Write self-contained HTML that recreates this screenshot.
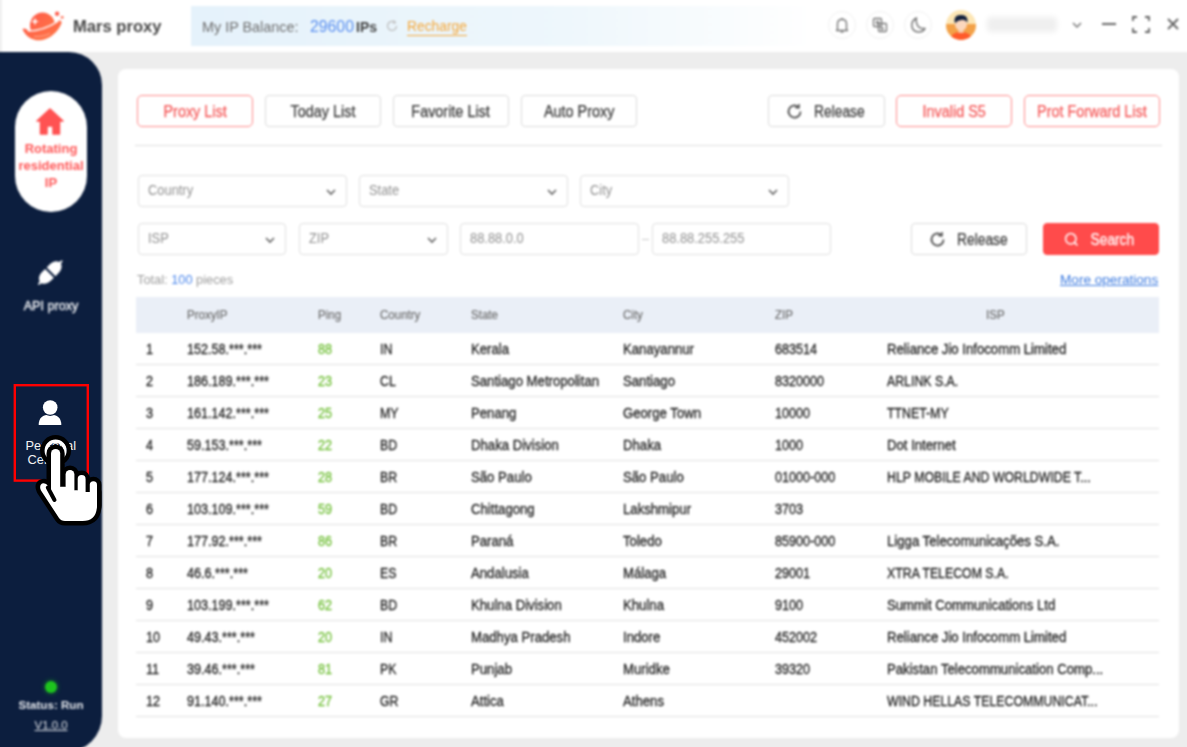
<!DOCTYPE html>
<html><head><meta charset="utf-8">
<style>
*{margin:0;padding:0;box-sizing:border-box}
html,body{width:1187px;height:747px;overflow:hidden;background:#ededed;font-family:"Liberation Sans",sans-serif;color:#333}
.abs{position:absolute}
#hdr{left:-20px;top:-20px;width:1227px;height:72px;background:#fff}
#logo-t{left:73px;top:16.5px;font-size:16.6px;font-weight:bold;color:#484848;white-space:nowrap}
#bal{left:191px;top:6px;width:620px;height:40px;background:linear-gradient(90deg,#e5f2fb 0%,#eef7fc 60%,#fff 100%)}
.t{position:absolute;white-space:nowrap;line-height:1}
#side{left:-20px;top:52px;width:122px;height:700px;background:#0c1e3e;border-radius:0 33px 36px 0}
#card{left:118px;top:69px;width:1061px;height:669px;background:#fff;border-radius:8px}
.bt{display:inline-block;transform:translateY(1.2px) scaleX(0.9);-webkit-text-stroke:0.25px currentColor}
.btn{position:absolute;height:32px;border:1px solid #dcdcdc;border-radius:4px;background:#fff;font-size:16px;color:#383838;display:flex;align-items:center;justify-content:center;white-space:nowrap}
.btn.red{border-color:#ff8a8a;color:#f55a5a;border-radius:5px}
.sel{position:absolute;height:32px;border:1px solid #e0e0e0;border-radius:4px;background:#fff;font-size:14px;color:#909090}
.sel span{position:absolute;left:9px;top:7.3px;line-height:1;transform:scaleX(0.92);transform-origin:0 0}
.chev{position:absolute;top:11px;width:9px;height:9px}
#thead{left:136px;top:297px;width:1023px;height:36px;background:#eaeff7}
.th{position:absolute;top:309px;font-size:12px;transform:scaleX(0.96);transform-origin:0 0;color:#6e6e6e;-webkit-text-stroke:0.2px #6e6e6e;line-height:1;white-space:nowrap}
.row{position:absolute;left:136px;width:1023px;height:32px;border-bottom:1px solid #e0e0e0}
.td{position:absolute;font-size:14px;transform:scaleX(0.9);transform-origin:0 0;color:#222;-webkit-text-stroke:0.3px #222;line-height:1;white-space:nowrap}
.ping{color:#74c03c;-webkit-text-stroke:0.3px #74c03c}
#root{position:absolute;left:-20px;top:-20px;width:1227px;height:787px;background:#ededed;filter:blur(1px)}
#inner{position:absolute;left:20px;top:20px;width:1187px;height:747px}
</style></head><body><div id="root"><div id="inner">
<div id="hdr" class="abs"></div>
<div class="abs" style="left:-20px;top:-20px;width:22px;height:72px;background:#f0f0f0"></div>
<div id="logo-t" class="abs">Mars proxy</div>
<div id="bal" class="abs"></div>
<div class="t" style="left:202px;top:20px;font-size:14.4px;color:#6e6e6e">My IP Balance:</div>
<div class="t" style="left:310px;top:19px;font-size:15.8px;color:#5a8ff0">29600</div>
<div class="t" style="left:356px;top:20px;font-size:14px;color:#444;font-weight:bold">IPs</div>
<div class="t" style="left:407px;top:19.5px;font-size:13.8px;color:#f5a738;border-bottom:1.5px solid #f5a738;padding-bottom:1.5px">Recharge</div>


<!-- HEADER -->
<svg class="abs" style="left:0;top:0" width="70" height="50">
<defs><linearGradient id="lg" x1="0" y1="0" x2="1" y2="1"><stop offset="0" stop-color="#ff5a4a"/><stop offset="1" stop-color="#ff7a45"/></linearGradient></defs>
<g fill="url(#lg)">
<ellipse cx="42.5" cy="25.5" rx="12.5" ry="13"/>
<path d="M22.5,29.2 C24.5,27.5 26.5,29.5 28.5,31 C38,31 50,26 58.7,20.5 C61,20 62,21.5 61.4,23.5 C58,32 50,39 41,40.2 C33,41 26,37 22.5,29.2 Z"/>
</g>
<path d="M27.8,31 C38,31.2 50,26.5 58.5,21" fill="none" stroke="#fff" stroke-width="1.5" opacity="0.85"/>
<path d="M34,36.5 C40,37 46,35.5 50,33.5" fill="none" stroke="#fff" stroke-width="0.9" opacity="0.45"/>
<path d="M35,17.5 L36.1,20.4 L39,21.5 L36.1,22.6 L35,25.5 L33.9,22.6 L31,21.5 L33.9,20.4 Z" fill="#fff" opacity="0.95"/>
<circle cx="57.1" cy="13.8" r="2.2" fill="#ff5e4e"/>
<circle cx="62.2" cy="17.3" r="1.4" fill="#ff6e55"/>
</svg>
<!-- header icons -->
<div class="abs" style="left:828px;top:11px;width:28px;height:28px;border-radius:50%;border:1px solid #f1f1f1"></div>
<div class="abs" style="left:866px;top:11px;width:28px;height:28px;border-radius:50%;border:1px solid #f1f1f1"></div>
<div class="abs" style="left:904px;top:11px;width:28px;height:28px;border-radius:50%;border:1px solid #f1f1f1"></div>
<svg class="abs" style="left:828px;top:11px" width="28" height="28" viewBox="0 0 28 28" fill="none" stroke="#777" stroke-width="1.4" stroke-linejoin="round">
<path d="M9.5,18.5 L9.5,13 Q9.5,8.5 14,8.3 Q18.5,8.5 18.5,13 L18.5,18.5 L19.5,19.5 L8.5,19.5 Z"/>
<path d="M14,7 L14,8.3"/><path d="M12.5,21 L15.5,21"/>
</svg>
<svg class="abs" style="left:866px;top:11px" width="28" height="28" viewBox="0 0 28 28" fill="none" stroke="#777" stroke-width="1.3">
<rect x="7.5" y="7.5" width="8" height="8" rx="1"/>
<rect x="12.5" y="12.5" width="8" height="8" rx="1"/>
<path d="M9.5,11.5 L13.5,11.5 M11.5,9.5 L11.5,13.5"/><path d="M15,16 L18,17.5 L15,19 Z" stroke-width="1"/>
</svg>
<svg class="abs" style="left:904px;top:11px" width="28" height="28" viewBox="0 0 28 28" fill="none" stroke="#777" stroke-width="1.5" stroke-linejoin="round">
<path d="M12.5,7 Q7.5,9.5 7.8,14.8 Q8.5,20.5 14.5,21 Q18.8,21 21,17.5 Q15,18 13,13.5 Q11.5,10 12.5,7 Z"/>
</svg>
<!-- avatar -->
<svg class="abs" style="left:946px;top:10px" width="30" height="30" viewBox="0 0 30 30">
<defs><clipPath id="avc"><circle cx="15" cy="15" r="15"/></clipPath></defs>
<g clip-path="url(#avc)">
<rect width="30" height="30" fill="#fde6b5"/>
<rect y="14" width="30" height="16" fill="#f3a148"/>
<path d="M4,30 Q5,22 15,22 Q25,22 26,30 Z" fill="#ff5a2a"/>
<rect x="12.5" y="17" width="5" height="6" fill="#f7c9a8"/>
<ellipse cx="15" cy="14" rx="6" ry="6.8" fill="#fbd7bd"/>
<path d="M8.5,12 Q8,5 14,5 Q21,4.5 21.5,10 L21.5,12.5 Q19,9 15,10 Q11,10.5 9.5,13 Z" fill="#14213d"/>
</g>
</svg>
<div class="abs" style="left:987px;top:17px;width:70px;height:15px;background:#efefef;filter:blur(2.5px);border-radius:4px"></div>
<svg class="abs" style="left:1071px;top:20px" width="12" height="10" viewBox="0 0 12 10" fill="none" stroke="#777" stroke-width="1.5"><path d="M2,3 L6,7 L10,3"/></svg>
<div class="abs" style="left:1102px;top:23px;width:14px;height:2px;background:#666"></div>
<svg class="abs" style="left:1132px;top:16px" width="18" height="17" viewBox="0 0 18 17" fill="none" stroke="#666" stroke-width="1.8"><path d="M1,5 L1,1 L5,1 M13,1 L17,1 L17,5 M17,12 L17,16 L13,16 M5,16 L1,16 L1,12"/></svg>
<svg class="abs" style="left:1166px;top:17px" width="14" height="14" viewBox="0 0 14 14" fill="none" stroke="#666" stroke-width="1.9"><path d="M2,2 L12,12 M12,2 L2,12"/></svg>
<!-- balance refresh icon -->
<svg class="abs" style="left:385px;top:19px" width="14" height="14" viewBox="0 0 14 14" fill="none" stroke="#bbb" stroke-width="1.3"><path d="M11.5,7 A4.5,4.5 0 1 1 9.5,3.2"/><path d="M8.5,1.5 L10.5,3.5 L8,4.5" stroke-width="1.1"/></svg>
<!-- /HEADER -->
<div id="side" class="abs"></div>
<div id="card" class="abs"></div>
<!-- SIDEBAR -->
<div class="abs" style="left:15px;top:91px;width:72px;height:121px;background:#fff;border-radius:36px"></div>
<svg class="abs" style="left:36px;top:108px" width="28" height="27" viewBox="0 0 28 27">
<path d="M14 1 L27 13 L23.5 13 L23.5 26 L17 26 L17 18 L11 18 L11 26 L4.5 26 L4.5 13 L1 13 Z" fill="#ff5252" stroke="#ff5252" stroke-width="1.5" stroke-linejoin="round"/>
</svg>
<div class="t" style="left:0;width:102px;text-align:center;top:140px;font-size:13px;font-weight:bold;color:#ff5757;line-height:17px;white-space:normal">Rotating<br>residential<br>IP</div>

<svg class="abs" style="left:0;top:0;overflow:visible" width="102" height="300">
<g transform="translate(50.3 272.6) rotate(45)" fill="#fff">
<path d="M-6.2,-1.1 L6.2,-1.1 L6.2,-5.5 C6.2,-10 3.8,-13 1.3,-13.7 L0.6,-17 L-0.6,-17 L-1.3,-13.7 C-3.8,-13 -6.2,-10 -6.2,-5.5 Z"/>
<path d="M-6.2,1.1 L6.2,1.1 L6.2,5.5 C6.2,10 3.8,13 1.3,13.7 L0.6,17 L-0.6,17 L-1.3,13.7 C-3.8,13 -6.2,10 -6.2,5.5 Z"/>
</g></svg>
<div class="t" style="left:0;width:102px;text-align:center;top:300px;font-size:12.6px;color:#e4e7ec;-webkit-text-stroke:0.45px #e4e7ec">API proxy</div>



<div class="abs" style="left:45px;top:681px;width:12px;height:12px;border-radius:50%;background:#1ec31e;box-shadow:0 0 4px 1px rgba(30,200,30,0.35)"></div>
<div class="t" style="left:0;width:102px;text-align:center;top:699px;font-size:11.6px;font-weight:bold;color:#e6e9ee">Status: Run</div>
<div class="t" style="left:0;width:102px;text-align:center;top:720px;font-size:11.4px;color:#e0e3e8"><span style="text-decoration:underline">V1.0.0</span></div>

<!-- /SIDEBAR -->


<!-- top buttons -->
<div class="btn red" style="left:137px;top:95px;width:116px"><span class="bt">Proxy List</span></div>
<div class="btn" style="left:265px;top:95px;width:116px"><span class="bt">Today List</span></div>
<div class="btn" style="left:393px;top:95px;width:116px"><span class="bt">Favorite List</span></div>
<div class="btn" style="left:521px;top:95px;width:116px"><span class="bt">Auto Proxy</span></div>
<div class="btn" style="left:768px;top:95px;width:117px"><svg width="17" height="17" viewBox="0 0 15 15" fill="none" stroke="#555" stroke-width="1.6" style="margin-right:7px;margin-left:2px"><path d="M12.8,7.5 A5.3,5.3 0 1 1 10.8,3.4"/><path d="M11.6,1 L11.3,4.2 L8.2,3.8" stroke-width="1.5"/></svg><span class="bt" style="transform:translateY(1.2px) scaleX(0.86)">Release</span></div>
<div class="btn red" style="left:896px;top:95px;width:116px"><span class="bt">Invalid S5</span></div>
<div class="btn red" style="left:1024px;top:95px;width:136px"><span class="bt">Prot Forward List</span></div>
<div class="abs" style="left:135px;top:145px;width:1027px;height:1px;background:#dedede"></div>

<!-- filters -->
<div class="sel" style="left:138px;top:175px;width:209px"><span>Country</span><svg class="chev" style="right:9px;top:12px;width:12px;height:8px" width="12" height="8" viewBox="0 0 12 8" fill="none" stroke="#666" stroke-width="1.6"><path d="M2,2 L6,6 L10,2"/></svg></div>
<div class="sel" style="left:359px;top:175px;width:209px"><span>State</span><svg class="chev" style="right:9px;top:12px;width:12px;height:8px" width="12" height="8" viewBox="0 0 12 8" fill="none" stroke="#666" stroke-width="1.6"><path d="M2,2 L6,6 L10,2"/></svg></div>
<div class="sel" style="left:580px;top:175px;width:209px"><span>City</span><svg class="chev" style="right:9px;top:12px;width:12px;height:8px" width="12" height="8" viewBox="0 0 12 8" fill="none" stroke="#666" stroke-width="1.6"><path d="M2,2 L6,6 L10,2"/></svg></div>
<div class="sel" style="left:138px;top:223px;width:148px"><span>ISP</span><svg class="chev" style="right:9px;top:12px;width:12px;height:8px" width="12" height="8" viewBox="0 0 12 8" fill="none" stroke="#666" stroke-width="1.6"><path d="M2,2 L6,6 L10,2"/></svg></div>
<div class="sel" style="left:299px;top:223px;width:149px"><span>ZIP</span><svg class="chev" style="right:9px;top:12px;width:12px;height:8px" width="12" height="8" viewBox="0 0 12 8" fill="none" stroke="#666" stroke-width="1.6"><path d="M2,2 L6,6 L10,2"/></svg></div>
<div class="sel" style="left:460px;top:223px;width:179px"><span>88.88.0.0</span></div>
<div class="abs" style="left:642px;top:239px;width:7px;height:1px;background:#ccc"></div>
<div class="sel" style="left:652px;top:223px;width:179px"><span>88.88.255.255</span></div>
<div class="btn" style="left:911px;top:223px;width:116px"><svg width="17" height="17" viewBox="0 0 15 15" fill="none" stroke="#555" stroke-width="1.6" style="margin-right:7px;margin-left:2px"><path d="M12.8,7.5 A5.3,5.3 0 1 1 10.8,3.4"/><path d="M11.6,1 L11.3,4.2 L8.2,3.8" stroke-width="1.5"/></svg><span class="bt" style="transform:translateY(1.2px) scaleX(0.86)">Release</span></div>
<div class="btn" style="left:1043px;top:223px;width:116px;background:#ff4b4b;border-color:#ff4b4b;color:#fff"><svg width="15" height="15" viewBox="0 0 15 15" fill="none" stroke="#fff" stroke-width="1.5" style="margin-right:8px"><circle cx="6.8" cy="6.8" r="5.2"/><path d="M10.6,10.6 L13.5,13.5"/></svg><span class="bt" style="transform:translateY(1.2px) scaleX(0.86)">Search</span></div>

<div class="t" style="left:137px;top:274px;font-size:12.8px;color:#9c9c9c">Total: <span style="color:#4a86ec">100</span> pieces</div>
<div class="t" style="left:1060px;top:273px;font-size:13.6px;color:#3d7be0;text-decoration:underline">More operations</div>

<div id="thead" class="abs"></div>
<!--TABLE-->
<div class="th" style="left:187px">ProxyIP</div>
<div class="th" style="left:318px">Ping</div>
<div class="th" style="left:380px">Country</div>
<div class="th" style="left:471px">State</div>
<div class="th" style="left:623px">City</div>
<div class="th" style="left:775px">ZIP</div>
<div class="th" style="left:986px">ISP</div>
<div class="row" style="top:333px"></div>
<div class="td" style="left:146px;top:342px;transform:scaleX(0.9)">1</div>
<div class="td" style="left:187px;top:342px;transform:scaleX(0.9)">152.58.***.***</div>
<div class="td ping" style="left:318px;top:342px;transform:scaleX(0.9)">88</div>
<div class="td" style="left:380px;top:342px;transform:scaleX(0.88)">IN</div>
<div class="td" style="left:471px;top:342px;transform:scaleX(0.94)">Kerala</div>
<div class="td" style="left:623px;top:342px;transform:scaleX(0.94)">Kanayannur</div>
<div class="td" style="left:775px;top:342px;transform:scaleX(0.9)">683514</div>
<div class="td" style="left:887px;top:342px;transform:scaleX(0.94)">Reliance Jio Infocomm Limited</div>
<div class="row" style="top:365px"></div>
<div class="td" style="left:146px;top:374px;transform:scaleX(0.9)">2</div>
<div class="td" style="left:187px;top:374px;transform:scaleX(0.9)">186.189.***.***</div>
<div class="td ping" style="left:318px;top:374px;transform:scaleX(0.9)">23</div>
<div class="td" style="left:380px;top:374px;transform:scaleX(0.88)">CL</div>
<div class="td" style="left:471px;top:374px;transform:scaleX(0.94)">Santiago Metropolitan</div>
<div class="td" style="left:623px;top:374px;transform:scaleX(0.94)">Santiago</div>
<div class="td" style="left:775px;top:374px;transform:scaleX(0.9)">8320000</div>
<div class="td" style="left:887px;top:374px;transform:scaleX(0.88)">ARLINK S.A.</div>
<div class="row" style="top:397px"></div>
<div class="td" style="left:146px;top:406px;transform:scaleX(0.9)">3</div>
<div class="td" style="left:187px;top:406px;transform:scaleX(0.9)">161.142.***.***</div>
<div class="td ping" style="left:318px;top:406px;transform:scaleX(0.9)">25</div>
<div class="td" style="left:380px;top:406px;transform:scaleX(0.88)">MY</div>
<div class="td" style="left:471px;top:406px;transform:scaleX(0.94)">Penang</div>
<div class="td" style="left:623px;top:406px;transform:scaleX(0.94)">George Town</div>
<div class="td" style="left:775px;top:406px;transform:scaleX(0.9)">10000</div>
<div class="td" style="left:887px;top:406px;transform:scaleX(0.88)">TTNET-MY</div>
<div class="row" style="top:429px"></div>
<div class="td" style="left:146px;top:438px;transform:scaleX(0.9)">4</div>
<div class="td" style="left:187px;top:438px;transform:scaleX(0.9)">59.153.***.***</div>
<div class="td ping" style="left:318px;top:438px;transform:scaleX(0.9)">22</div>
<div class="td" style="left:380px;top:438px;transform:scaleX(0.88)">BD</div>
<div class="td" style="left:471px;top:438px;transform:scaleX(0.94)">Dhaka Division</div>
<div class="td" style="left:623px;top:438px;transform:scaleX(0.94)">Dhaka</div>
<div class="td" style="left:775px;top:438px;transform:scaleX(0.9)">1000</div>
<div class="td" style="left:887px;top:438px;transform:scaleX(0.94)">Dot Internet</div>
<div class="row" style="top:461px"></div>
<div class="td" style="left:146px;top:470px;transform:scaleX(0.9)">5</div>
<div class="td" style="left:187px;top:470px;transform:scaleX(0.9)">177.124.***.***</div>
<div class="td ping" style="left:318px;top:470px;transform:scaleX(0.9)">28</div>
<div class="td" style="left:380px;top:470px;transform:scaleX(0.88)">BR</div>
<div class="td" style="left:471px;top:470px;transform:scaleX(0.94)">São Paulo</div>
<div class="td" style="left:623px;top:470px;transform:scaleX(0.94)">São Paulo</div>
<div class="td" style="left:775px;top:470px;transform:scaleX(0.9)">01000-000</div>
<div class="td" style="left:887px;top:470px;transform:scaleX(0.88)">HLP MOBILE AND WORLDWIDE T...</div>
<div class="row" style="top:493px"></div>
<div class="td" style="left:146px;top:502px;transform:scaleX(0.9)">6</div>
<div class="td" style="left:187px;top:502px;transform:scaleX(0.9)">103.109.***.***</div>
<div class="td ping" style="left:318px;top:502px;transform:scaleX(0.9)">59</div>
<div class="td" style="left:380px;top:502px;transform:scaleX(0.88)">BD</div>
<div class="td" style="left:471px;top:502px;transform:scaleX(0.94)">Chittagong</div>
<div class="td" style="left:623px;top:502px;transform:scaleX(0.94)">Lakshmipur</div>
<div class="td" style="left:775px;top:502px;transform:scaleX(0.9)">3703</div>
<div class="row" style="top:525px"></div>
<div class="td" style="left:146px;top:534px;transform:scaleX(0.9)">7</div>
<div class="td" style="left:187px;top:534px;transform:scaleX(0.9)">177.92.***.***</div>
<div class="td ping" style="left:318px;top:534px;transform:scaleX(0.9)">86</div>
<div class="td" style="left:380px;top:534px;transform:scaleX(0.88)">BR</div>
<div class="td" style="left:471px;top:534px;transform:scaleX(0.94)">Paraná</div>
<div class="td" style="left:623px;top:534px;transform:scaleX(0.94)">Toledo</div>
<div class="td" style="left:775px;top:534px;transform:scaleX(0.9)">85900-000</div>
<div class="td" style="left:887px;top:534px;transform:scaleX(0.94)">Ligga Telecomunicações S.A.</div>
<div class="row" style="top:557px"></div>
<div class="td" style="left:146px;top:566px;transform:scaleX(0.9)">8</div>
<div class="td" style="left:187px;top:566px;transform:scaleX(0.9)">46.6.***.***</div>
<div class="td ping" style="left:318px;top:566px;transform:scaleX(0.9)">20</div>
<div class="td" style="left:380px;top:566px;transform:scaleX(0.88)">ES</div>
<div class="td" style="left:471px;top:566px;transform:scaleX(0.94)">Andalusia</div>
<div class="td" style="left:623px;top:566px;transform:scaleX(0.94)">Málaga</div>
<div class="td" style="left:775px;top:566px;transform:scaleX(0.9)">29001</div>
<div class="td" style="left:887px;top:566px;transform:scaleX(0.88)">XTRA TELECOM S.A.</div>
<div class="row" style="top:589px"></div>
<div class="td" style="left:146px;top:598px;transform:scaleX(0.9)">9</div>
<div class="td" style="left:187px;top:598px;transform:scaleX(0.9)">103.199.***.***</div>
<div class="td ping" style="left:318px;top:598px;transform:scaleX(0.9)">62</div>
<div class="td" style="left:380px;top:598px;transform:scaleX(0.88)">BD</div>
<div class="td" style="left:471px;top:598px;transform:scaleX(0.94)">Khulna Division</div>
<div class="td" style="left:623px;top:598px;transform:scaleX(0.94)">Khulna</div>
<div class="td" style="left:775px;top:598px;transform:scaleX(0.9)">9100</div>
<div class="td" style="left:887px;top:598px;transform:scaleX(0.94)">Summit Communications Ltd</div>
<div class="row" style="top:621px"></div>
<div class="td" style="left:146px;top:630px;transform:scaleX(0.9)">10</div>
<div class="td" style="left:187px;top:630px;transform:scaleX(0.9)">49.43.***.***</div>
<div class="td ping" style="left:318px;top:630px;transform:scaleX(0.9)">20</div>
<div class="td" style="left:380px;top:630px;transform:scaleX(0.88)">IN</div>
<div class="td" style="left:471px;top:630px;transform:scaleX(0.94)">Madhya Pradesh</div>
<div class="td" style="left:623px;top:630px;transform:scaleX(0.94)">Indore</div>
<div class="td" style="left:775px;top:630px;transform:scaleX(0.9)">452002</div>
<div class="td" style="left:887px;top:630px;transform:scaleX(0.94)">Reliance Jio Infocomm Limited</div>
<div class="row" style="top:653px"></div>
<div class="td" style="left:146px;top:662px;transform:scaleX(0.9)">11</div>
<div class="td" style="left:187px;top:662px;transform:scaleX(0.9)">39.46.***.***</div>
<div class="td ping" style="left:318px;top:662px;transform:scaleX(0.9)">81</div>
<div class="td" style="left:380px;top:662px;transform:scaleX(0.88)">PK</div>
<div class="td" style="left:471px;top:662px;transform:scaleX(0.94)">Punjab</div>
<div class="td" style="left:623px;top:662px;transform:scaleX(0.94)">Muridke</div>
<div class="td" style="left:775px;top:662px;transform:scaleX(0.9)">39320</div>
<div class="td" style="left:887px;top:662px;transform:scaleX(0.94)">Pakistan Telecommunication Comp...</div>
<div class="row" style="top:685px"></div>
<div class="td" style="left:146px;top:694px;transform:scaleX(0.9)">12</div>
<div class="td" style="left:187px;top:694px;transform:scaleX(0.9)">91.140.***.***</div>
<div class="td ping" style="left:318px;top:694px;transform:scaleX(0.9)">27</div>
<div class="td" style="left:380px;top:694px;transform:scaleX(0.88)">GR</div>
<div class="td" style="left:471px;top:694px;transform:scaleX(0.94)">Attica</div>
<div class="td" style="left:623px;top:694px;transform:scaleX(0.94)">Athens</div>
<div class="td" style="left:887px;top:694px;transform:scaleX(0.88)">WIND HELLAS TELECOMMUNICAT...</div>
<!--/TABLE-->
</div></div>
<div id="sharp" style="position:absolute;left:0;top:0;width:1187px;height:747px">
<svg class="abs" style="left:0;top:0" width="102" height="500"><rect x="14.8" y="385.2" width="73" height="95.4" fill="none" stroke="#ff0000" stroke-width="2.4"/></svg>
<svg class="abs" style="left:38px;top:400px" width="25" height="26" viewBox="0 0 25 26">
<path d="M0.7 25 Q0.7 14.5 12 14.5 Q23.3 14.5 23.3 25 Z" fill="#fff"/>
<circle cx="12.2" cy="7.5" r="8.4" fill="#0c1e3e"/>
<circle cx="12.2" cy="7.5" r="7.3" fill="#fff"/>
</svg>
<div class="t" style="left:25.5px;top:440px;font-size:12.8px;color:#f2f2f2">Personal</div><div class="t" style="left:27.6px;top:453.5px;font-size:12.8px;color:#f2f2f2">Center</div>
<!-- HAND -->
<svg class="abs" style="left:0;top:0" width="110" height="540">
<circle cx="55.6" cy="450.6" r="13.2" fill="none" stroke="#000" stroke-width="4.6"/>
<circle cx="55.6" cy="450.6" r="9.3" fill="none" stroke="#fff" stroke-width="3.4"/>
<g fill="#000" stroke="#000" stroke-width="9" stroke-linejoin="round">
<rect x="51" y="448.9" width="9.2" height="56" rx="4.6"/>
<rect x="65.6" y="470" width="8.8" height="40" rx="4.4"/>
<rect x="77.7" y="475" width="7.9" height="34" rx="3.95"/>
<rect x="89.8" y="481.2" width="7.2" height="28" rx="3.6"/>
<path d="M51,497 L51,492 L97,492 L97,505 Q97,521 82.5,521 L65,521 Q61,521 59,518 L41,490.5 Q38.8,485.5 42,483.6 Q45.5,482.2 48.5,486.5 Z"/>
</g>
<g fill="#fff">
<rect x="51" y="448.9" width="9.2" height="56" rx="4.6"/>
<rect x="65.6" y="470" width="8.8" height="40" rx="4.4"/>
<rect x="77.7" y="475" width="7.9" height="34" rx="3.95"/>
<rect x="89.8" y="481.2" width="7.2" height="28" rx="3.6"/>
<path d="M51,497 L51,492 L97,492 L97,505 Q97,521 82.5,521 L65,521 Q61,521 59,518 L41,490.5 Q38.8,485.5 42,483.6 Q45.5,482.2 48.5,486.5 Z"/>
<rect x="59" y="486.8" width="8" height="10" rx="1.5"/>
<rect x="73" y="490.3" width="6" height="8" rx="1.5"/>
<rect x="84.5" y="492.4" width="6" height="8" rx="1.5"/>
</g>
<path d="M47.8,487.5 L54.5,500" stroke="#000" stroke-width="4" stroke-linecap="round"/>
</svg>
</div>
</body></html>
